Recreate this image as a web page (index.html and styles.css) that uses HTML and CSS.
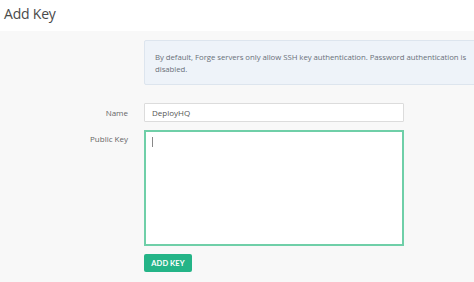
FILE: index.html
```html
<!DOCTYPE html>
<html>
<head>
<meta charset="utf-8">
<link rel="stylesheet" href="styles.css">
</head>
<body>
<h1 class="title">Add Key</h1>
<div class="panel">
  <div class="row">
    <div class="label"></div>
    <div class="notice">By default, Forge servers only allow SSH key authentication. Password authentication is disabled.</div>
  </div>
  <div class="row row-name">
    <label class="label">Name</label>
    <div class="field"><input class="input" type="text" value="DeployHQ"></div>
  </div>
  <div class="row row-key">
    <label class="label">Public Key</label>
    <div class="field"><div class="textarea"><span class="caret"></span></div></div>
  </div>
  <div class="row">
    <div class="label"></div>
    <button class="btn">ADD KEY</button>
  </div>
</div>
</body>
</html>
```

FILE: styles.css
```css
html, body {
  margin: 0;
  padding: 0;
  background: #ffffff;
  overflow: hidden;
  width: 474px;
  height: 282px;
}
body {
  font-family: "Open Sans", "DejaVu Sans", sans-serif;
  color: #555;
}
.title {
  margin: 0;
  height: 31px;
  box-sizing: border-box;
  padding: 4px 0 0 4px;
  font-size: 14px;
  font-weight: 400;
  letter-spacing: -0.2px;
  line-height: 20px;
  color: #4a4a4a;
}
.panel {
  background: #f8f8f8;
  height: 251px;
  padding-top: 9px;
  box-sizing: border-box;
}
.row {
  display: flex;
  align-items: flex-start;
}
.label {
  width: 128px;
  flex: none;
  margin-right: 16px;
  text-align: right;
  font-size: 8px;
  color: #666;
}
.notice {
  flex: none;
  width: 350px;
  box-sizing: border-box;
  height: 45px;
  padding: 10px 10px;
  background: #eef3f9;
  border: 1px solid #dde5ee;
  border-radius: 2px;
  font-size: 7.8px;
  letter-spacing: -0.05px;
  line-height: 12px;
  color: #6a717a;
}
.row-name {
  margin-top: 18px;
  height: 27px;
}
.row-name .label {
  line-height: 19px;
}
.field {
  width: 260px;
}
.input {
  display: block;
  width: 260px;
  height: 19px;
  box-sizing: border-box;
  margin: 0;
  border: 1px solid #dcdcdc;
  border-radius: 1px;
  background: #fff;
  padding: 0 7px;
  font-family: "Open Sans", "DejaVu Sans", sans-serif;
  font-size: 8px;
  color: #555;
  outline: none;
}
.textarea {
  display: block;
  width: 260px;
  height: 116px;
  box-sizing: border-box;
  border: 2px solid #6fcfa8;
  background: #fff;
  padding: 5px 6px;
}
.caret {
  display: block;
  width: 1px;
  height: 10px;
  background: #888;
}
.row-key .label {
  line-height: 18px;
}
.btn {
  margin-top: 8px;
  width: 48px;
  height: 18px;
  border: none;
  border-radius: 2px;
  background: #24b487;
  color: #fff;
  font-family: "Lato", "Open Sans", sans-serif;
  font-weight: 700;
  font-size: 7.5px;
  letter-spacing: 0.1px;
  padding: 0;
}
```
